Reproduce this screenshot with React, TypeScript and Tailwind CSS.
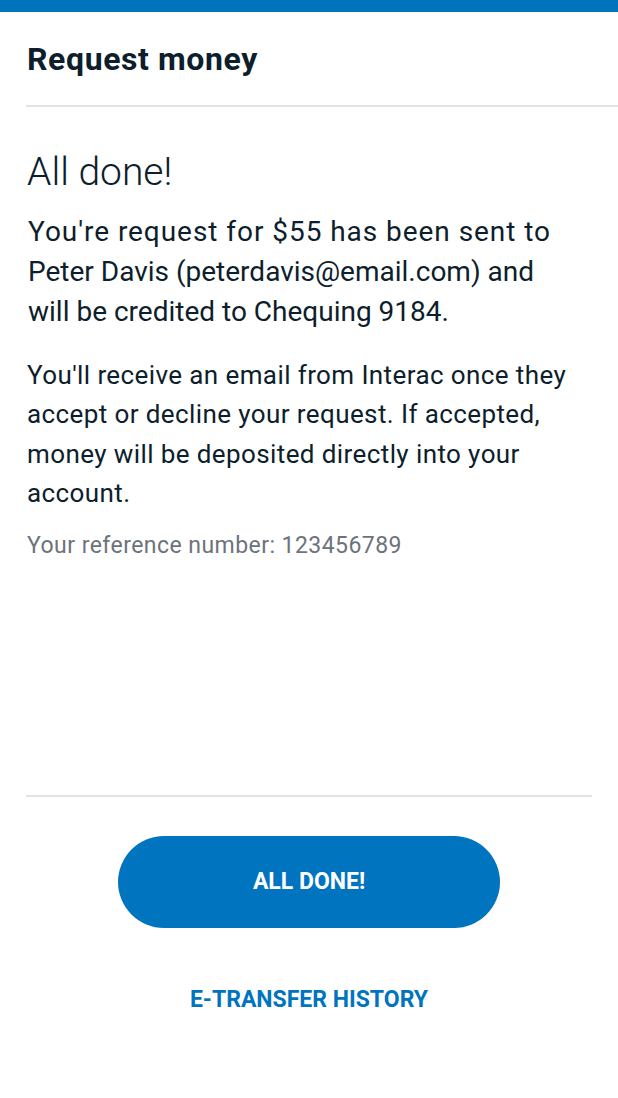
import React from "react";

export default function App() {
  return (
    <div className="w-[618px] h-[1098px] bg-white flex flex-col text-[#0d1e2c]" style={{ fontFamily: "Roboto, 'Noto Sans', sans-serif" }}>
      <div className="h-[12px] bg-[#0073bd] shrink-0" />
      <div className="h-[93px] flex items-center pl-[27px] shrink-0">
        <h1 className="text-[32px] font-bold leading-none tracking-[0.6px]">Request money</h1>
      </div>
      <div className="ml-[26px] h-[2px] bg-[#e1e1e6] shrink-0" />
      <div className="px-[27px] pt-[43px] flex flex-col">
        <h2 className="text-[39px] font-light leading-[45px]">All done!</h2>
        <p className="mt-[17px] max-w-[546px] text-[28px] leading-[40px] pl-px">
          <span className="tracking-[0.95px]">You're request for $55 has been sent to</span> Peter Davis (peterdavis@email.com) and will be credited to Chequing 9184.
        </p>
        <p className="mt-[24px] text-[26px] leading-[39.3px] tracking-[0.4px]">
          You'll receive an email from Interac once they accept or decline your request. If accepted, money will be deposited directly into your account.
        </p>
        <p className="mt-[18px] text-[23px] leading-[30px] tracking-[0.45px] text-[#6d737b]">Your reference number: 123456789</p>
      </div>
      <div className="flex-1" />
      <div className="mx-[26px] h-[2px] bg-[#e1e1e6] shrink-0" />
      <div className="flex flex-col items-center pt-[39px] pb-[85px]">
        <button className="w-[382px] h-[92px] rounded-full bg-[#0074be] text-white text-[23px] font-bold">ALL DONE!</button>
        <button className="mt-[58px] text-[23px] leading-[27px] font-bold text-[#0074be]">E-TRANSFER HISTORY</button>
      </div>
    </div>
  );
}
